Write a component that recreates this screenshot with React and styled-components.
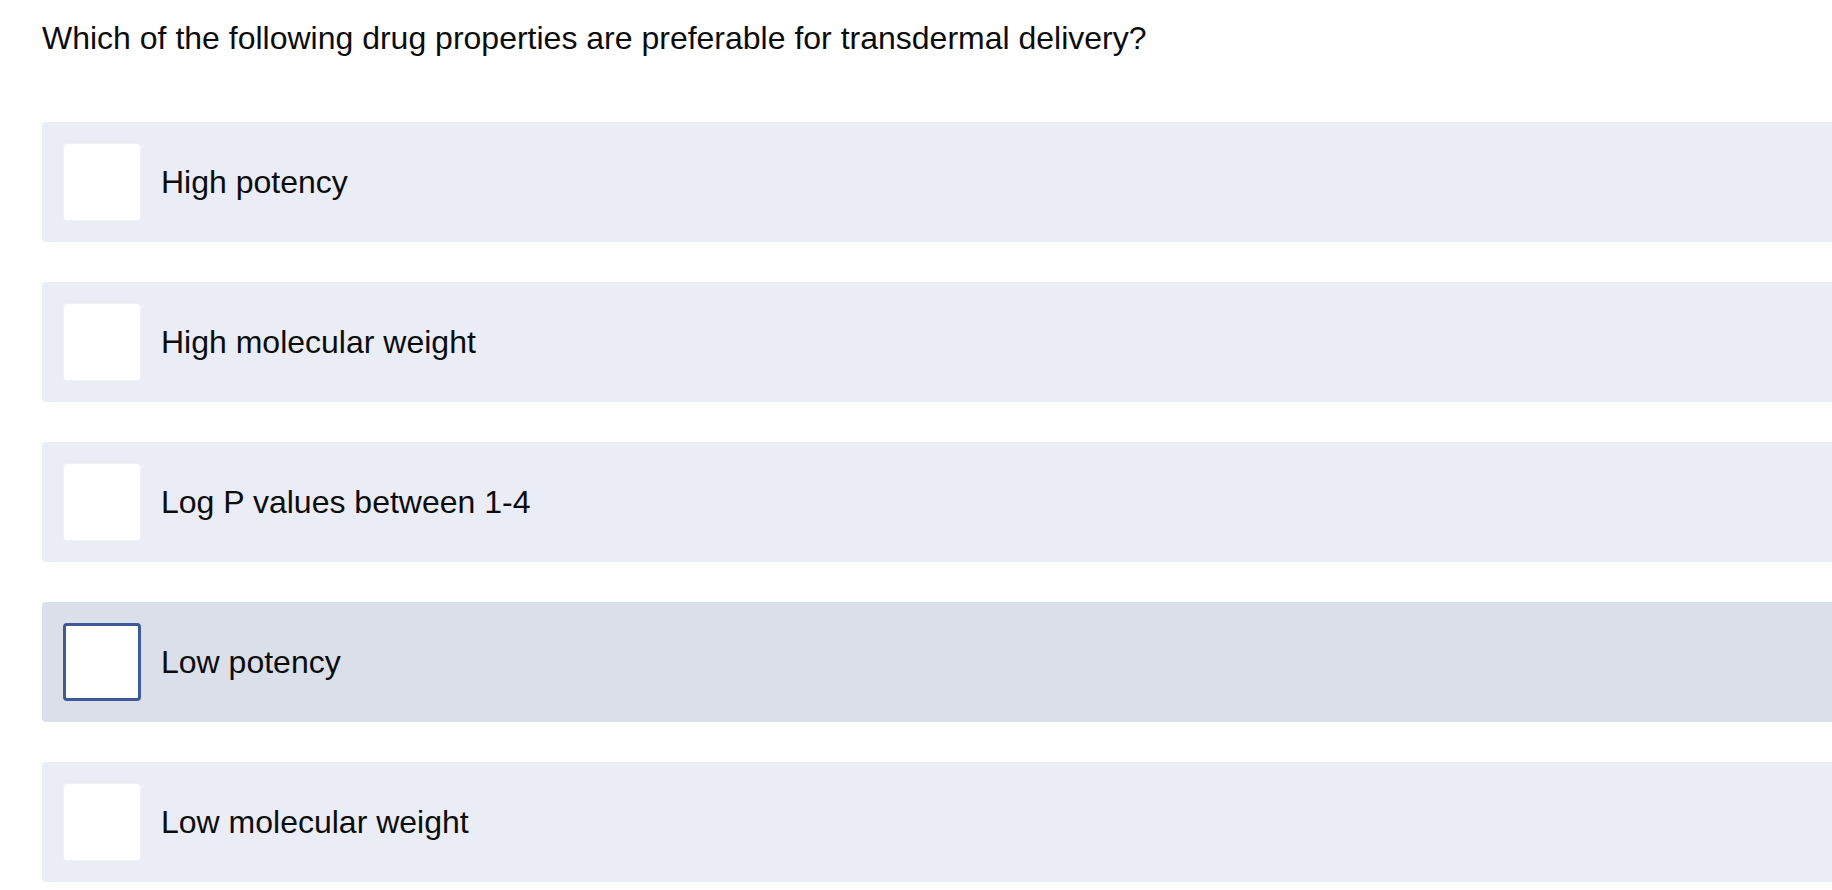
import React, { useState } from "react"
import styled, { createGlobalStyle } from "styled-components"

const Global = createGlobalStyle`
  html, body {
    margin: 0;
    padding: 0;
    background: #fff;
    overflow: hidden;
  }
  body {
    font-family: "Liberation Sans", Arial, sans-serif;
    color: #0c0c0c;
  }
`

const Page = styled.div`
  padding: 18px 0 0 42px;
`

const Question = styled.p`
  margin: 0 0 64px;
  font-size: 32px;
  line-height: 40px;
`

const List = styled.ul`
  list-style: none;
  margin: 0;
  padding: 0;
  display: flex;
  flex-direction: column;
  gap: 40px;
`

const Row = styled.li`
  display: flex;
  align-items: center;
  height: 120px;
  padding-left: 21px;
  border-radius: 4px 0 0 4px;
  background: ${(p) => (p.$active ? "#dadfe9" : "#eaedf5")};
  cursor: pointer;
`

const Box = styled.span`
  box-sizing: border-box;
  width: 78px;
  height: 78px;
  flex: none;
  background: #fff;
  border-radius: 4px;
  border: ${(p) => (p.$active ? "3px solid #40599b" : "1px solid #f0f1f4")};
`

const Label = styled.span`
  margin-left: 20px;
  font-size: 32px;
`

const options = [
  "High potency",
  "High molecular weight",
  "Log P values between 1-4",
  "Low potency",
  "Low molecular weight",
]

const App = () => {
  const [active, setActive] = useState(3)
  return (
    <>
      <Global />
      <Page>
        <Question>
          Which of the following drug properties are preferable for
          transdermal delivery?
        </Question>
        <List>
          {options.map((o, i) => (
            <Row key={o} $active={i === active} onMouseEnter={() => setActive(i)}>
              <Box $active={i === active} />
              <Label>{o}</Label>
            </Row>
          ))}
        </List>
      </Page>
    </>
  )
}

export default App
